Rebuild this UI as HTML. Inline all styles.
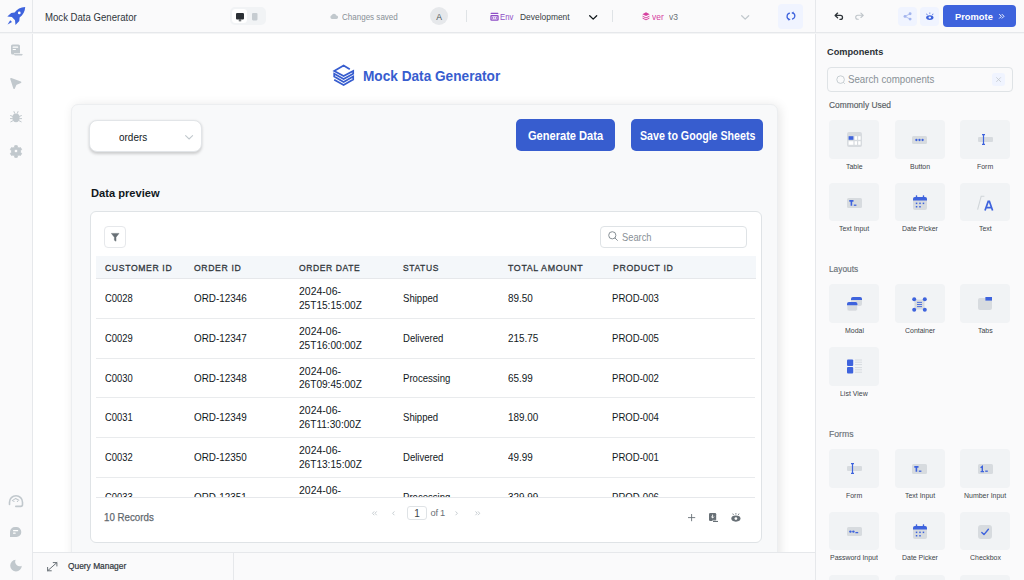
<!DOCTYPE html>
<html><head><meta charset="utf-8">
<style>
*{box-sizing:border-box;margin:0;padding:0}
html,body{width:1024px;height:580px;overflow:hidden;background:#fff;font-family:"Liberation Sans",sans-serif;color:#11181c}
.a{position:absolute}
svg{display:block;overflow:visible}
.t{white-space:nowrap;position:absolute;line-height:1}
</style></head><body>
<div class="a" style="left:0px;top:0px;width:33px;height:580px;background:#fafafb;border-right:1px solid #e6e8eb"></div>
<div class="a" style="left:33px;top:0px;width:782px;height:32px;background:#fafafb"></div>
<div class="a" style="left:815px;top:0px;width:209px;height:580px;background:#fafafb;border-left:1px solid #e6e8eb"></div>
<div class="a" style="left:0px;top:32px;width:1024px;height:1px;background:#e6e8eb"></div>
<div class="a" style="left:0px;top:33px;width:1024px;height:1px;background:#f4f5f6"></div>
<svg class="a" style="left:7px;top:7px;" width="18" height="18" viewBox="0 0 18 18"><g fill="#3e63dd">
<path d="M18.2 0 C13.5 0.2 10.2 2.2 7.6 5.6 L4.2 5.9 L0.3 9.6 L4.9 10.1 L8 13.2 L8.5 18 L12.3 14 L12.6 10.6 C16 8 18 4.8 18.2 0 Z"/>
<path d="M3.2 13.2 L5 15 L0.6 17.6 Z"/>
</g><circle cx="12.3" cy="5.9" r="1.35" fill="#fff"/></svg>
<svg class="a" style="left:10px;top:44px;" width="13" height="12" viewBox="0 0 13 12"><rect x="1" y="0.5" width="9" height="10" rx="1.6" fill="#c1c8cd"/>
<rect x="2.6" y="2.6" width="5.6" height="1.1" rx=".5" fill="#fff"/><rect x="2.6" y="5" width="3.4" height="1.1" rx=".5" fill="#fff"/>
<path d="M5 10.6 L11.8 10.6" stroke="#c1c8cd" stroke-width="1.6" stroke-linecap="round"/><path d="M4 9.6 L12.5 9.6" stroke="#fafafb" stroke-width=".7"/></svg>
<svg class="a" style="left:0px;top:0px;" width="34" height="100" viewBox="0 0 34 100"><path d="M11 78.8 L20.6 82.3 L15.9 84.2 L14.1 88.2 Z" fill="#c1c8cd" stroke="#c1c8cd" stroke-width="1.6" stroke-linejoin="round"/></svg>
<svg class="a" style="left:10px;top:111px;" width="12" height="12" viewBox="0 0 12 12"><g fill="#c1c8cd"><ellipse cx="6" cy="6.8" rx="3.6" ry="4.4"/></g>
<g stroke="#c1c8cd" stroke-width="1" stroke-linecap="round"><path d="M0.6 4.6 L2.6 5.4 M11.4 4.6 L9.4 5.4 M0.4 7.6 L2.4 7.6 M11.6 7.6 L9.6 7.6 M0.8 10.8 L2.8 9.8 M11.2 10.8 L9.2 9.8 M4 0.6 L4.6 2.2 M8 0.6 L7.4 2.2"/></g></svg>
<svg class="a" style="left:10px;top:145px;" width="12" height="12" viewBox="0 0 24 24"><path fill="#c1c8cd" fill-rule="evenodd" d="M9.6 1.2 h4.8 l0.7 3.1 l2.9 1.7 l3-1 l2.4 4.2 l-2.4 2.1 v3.4 l2.4 2.1 l-2.4 4.2 l-3-1 l-2.9 1.7 l-0.7 3.1 h-4.8 l-0.7-3.1 l-2.9-1.7 l-3 1 l-2.4-4.2 l2.4-2.1 v-3.4 l-2.4-2.1 l2.4-4.2 l3 1 l2.9-1.7 Z M12 8.6 a3.4 3.4 0 1 0 0.01 0 Z" stroke="#c1c8cd" stroke-width="1.6" stroke-linejoin="round"/></svg>
<svg class="a" style="left:8px;top:493px;" width="16" height="15" viewBox="0 0 16 15"><path d="M1.5 11.4 V9.2 A6.5 6.5 0 0 1 14.5 9.2 V11.6 Q14.5 13.4 12.7 13.4 H7.8" fill="none" stroke="#c1c8cd" stroke-width="1.6" stroke-linecap="round"/>
<path d="M4.4 7.6 L7.7 5.4 L10.8 7.2" fill="none" stroke="#c1c8cd" stroke-width="1.1" stroke-linecap="round" stroke-linejoin="round"/>
<circle cx="5.9" cy="8.4" r=".65" fill="#c1c8cd"/><circle cx="9.5" cy="8.4" r=".65" fill="#c1c8cd"/></svg>
<svg class="a" style="left:10px;top:526.7px;" width="11.3" height="10" viewBox="0 0 11.3 10"><path d="M0 10 V5 A5 5 0 0 1 5 0 H6.3 A4.9 4.9 0 0 1 11.3 5 A4.9 4.9 0 0 1 6.3 10 Z" fill="#c1c8cd"/>
<rect x="3" y="3.1" width="5.2" height="1.2" rx=".5" fill="#fff"/><rect x="3" y="5.5" width="2.7" height="1.2" rx=".5" fill="#fff"/></svg>
<svg class="a" style="left:10px;top:559px;" width="13" height="13" viewBox="0 0 13 13"><path d="M11.8 6.8 A5.8 5.8 0 1 1 5.6 0.8 A4.6 4.6 0 0 0 11.8 6.8 Z" fill="#c1c8cd"/></svg>
<div class="t" style="left:45.40px;top:12.09px;font-size:10.6px;color:#30363b;font-weight:400;transform:scaleX(0.9059);transform-origin:0 0;">Mock Data Generator</div>
<div class="a" style="left:229.8px;top:6.9px;width:36px;height:18.6px;background:#f1f3f5;border-radius:5px"></div>
<div class="a" style="left:232px;top:9.3px;width:15.4px;height:14px;background:#fff;border-radius:3.5px"></div>
<svg class="a" style="left:236px;top:12.5px;" width="8" height="8.4" viewBox="0 0 8 8.4"><rect x="0" y="0" width="8" height="6.5" rx="1.1" fill="#2b3035"/><rect x="3.45" y="6.2" width="1.1" height="1.4" fill="#2b3035"/><rect x="2.5" y="7.4" width="3" height=".9" rx=".45" fill="#2b3035"/></svg>
<svg class="a" style="left:252.2px;top:12.6px;" width="5.5" height="7.4" viewBox="0 0 5.5 7.4"><rect x="0" y="0" width="5.5" height="7.4" rx="1.1" fill="#c6ccd1"/></svg>
<svg class="a" style="left:330px;top:13px;" width="8" height="6" viewBox="0 0 8 6"><path d="M2 6 A2 2 0 0 1 1.6 2.2 A2.6 2.6 0 0 1 6.4 2.4 A1.8 1.8 0 0 1 6.2 6 Z" fill="#c1c8cd"/></svg>
<div class="t" style="left:341.90px;top:12.62px;font-size:8.8px;color:#889096;font-weight:400;transform:scaleX(0.9125);transform-origin:0 0;">Changes saved</div>
<div class="a" style="left:430px;top:6.9px;width:18.3px;height:18.3px;background:#e6e8eb;border-radius:50%"></div>
<div class="t" style="left:436.33px;top:13.09px;font-size:8.6px;color:#4c5358;font-weight:400;">A</div>
<div class="a" style="left:466px;top:10px;width:1px;height:12px;background:#dfe3e6"></div>
<svg class="a" style="left:489.5px;top:11.5px;" width="9" height="9" viewBox="0 0 9 9"><rect x="0.6" y="0.8" width="7.8" height="1.3" rx=".6" fill="#8e4ec6"/><rect x="0.3" y="2.9" width="8.4" height="5.9" rx="1.2" fill="#8e4ec6"/><rect x="1.6" y="4.2" width="5.8" height="3.3" rx=".3" fill="#f3eafa"/><rect x="2.3" y="4.8" width=".8" height="2.1" fill="#8e4ec6"/><rect x="5.9" y="4.8" width=".8" height="2.1" fill="#8e4ec6"/><rect x="4.1" y="5.4" width=".9" height=".9" fill="#8e4ec6"/></svg>
<div class="t" style="left:500.30px;top:12.55px;font-size:9px;color:#8e4ec6;font-weight:400;transform:scaleX(0.8575);transform-origin:0 0;">Env</div>
<div class="t" style="left:519.80px;top:12.55px;font-size:9px;color:#383e43;font-weight:400;transform:scaleX(0.9353);transform-origin:0 0;">Development</div>
<svg class="a" style="left:588.6px;top:14.6px;" width="8.4" height="4.8" viewBox="0 0 8.4 4.8"><path d="M0.7 0.7 L4.2 4.1 L7.7 0.7" fill="none" stroke="#11181c" stroke-width="1.3" stroke-linecap="round" stroke-linejoin="round"/></svg>
<div class="a" style="left:612px;top:10px;width:1px;height:12px;background:#dfe3e6"></div>
<svg class="a" style="left:641.7px;top:12px;" width="8" height="8.6" viewBox="0 0 8 9"><path d="M4 0.3 L7.8 2.3 L4 4.3 L0.2 2.3 Z" fill="#d6409f"/><path d="M0.4 4.4 L4 6.2 L7.6 4.4 M0.4 6.4 L4 8.2 L7.6 6.4" fill="none" stroke="#d6409f" stroke-width="1"/></svg>
<div class="t" style="left:651.90px;top:12.55px;font-size:9px;color:#d6409f;font-weight:400;transform:scaleX(0.9358);transform-origin:0 0;">ver</div>
<div class="t" style="left:669.00px;top:12.55px;font-size:9px;color:#687076;font-weight:400;transform:scaleX(0.9467);transform-origin:0 0;">v3</div>
<svg class="a" style="left:741.3px;top:14.6px;" width="8.4" height="4.8" viewBox="0 0 8.4 4.8"><path d="M0.7 0.7 L4.2 4.1 L7.7 0.7" fill="none" stroke="#c1c8cd" stroke-width="1.3" stroke-linecap="round" stroke-linejoin="round"/></svg>
<div class="a" style="left:777.8px;top:4px;width:25px;height:24.8px;background:#f0f4ff;border-radius:4px"></div>
<svg class="a" style="left:785px;top:11px;" width="12" height="10" viewBox="0 0 12 10"><path d="M4.9 2.2 A3.2 3.2 0 0 0 4.2 8.4" fill="none" stroke="#3e63dd" stroke-width="1.25"/><path d="M3.3 7.2 L5.6 8.5 L3.5 9.8 Z" fill="#3e63dd"/><path d="M7.0 8.1 A3.2 3.2 0 0 0 7.7 1.9" fill="none" stroke="#3e63dd" stroke-width="1.25"/><path d="M8.6 0.6 L6.3 1.9 L8.4 3.2 Z" fill="#3e63dd"/></svg>
<svg class="a" style="left:834px;top:12px;" width="10" height="9" viewBox="0 0 10 9"><path d="M3.6 1.1 L1.1 3.4 L3.6 5.7 M1.4 3.4 H6.5 A2 2 0 0 1 6.5 7.4 H6" fill="none" stroke="#2f353a" stroke-width="1.3" stroke-linecap="round" stroke-linejoin="round"/></svg>
<svg class="a" style="left:854px;top:12px;" width="10" height="9" viewBox="0 0 10 9"><path d="M6.9 1.1 L9.3 3.3 L6.9 5.5 M9 3.3 H3.7 A2 2 0 0 0 3.7 7.3 H4.3" fill="none" stroke="#bfc5ca" stroke-width="1.1" stroke-linecap="round" stroke-linejoin="round"/></svg>
<div class="a" style="left:898px;top:7px;width:19px;height:19px;background:#f0f4ff;border-radius:4px"></div>
<svg class="a" style="left:900px;top:10px;" width="14" height="12" viewBox="0 0 14 12"><circle cx="10.1" cy="3.8" r="1.45" fill="#a3b5ee"/><circle cx="5" cy="6.4" r="1.45" fill="#a3b5ee"/><circle cx="10.1" cy="9.1" r="1.45" fill="#a3b5ee"/><path d="M10.1 3.8 L5 6.4 L10.1 9.1" fill="none" stroke="#a3b5ee" stroke-width=".8"/></svg>
<div class="a" style="left:920px;top:7px;width:19px;height:19px;background:#f0f4ff;border-radius:4px"></div>
<svg class="a" style="left:922px;top:10px;" width="16" height="12" viewBox="0 0 16 12"><ellipse cx="7.8" cy="7.6" rx="3.7" ry="2.45" fill="#3e63dd"/><ellipse cx="7.8" cy="7.6" rx="1.3" ry="1.05" fill="#f0f4ff"/><path d="M4.6 4.2 L5.1 4.4 M7.8 3.0 V3.3 M11 4.2 L10.5 4.4" stroke="#3e63dd" stroke-width=".85" stroke-linecap="round"/></svg>
<div class="a" style="left:942.6px;top:5.1px;width:73.2px;height:22.3px;background:#3e63dd;border-radius:4px"></div>
<div class="t" style="left:954.50px;top:12.35px;font-size:9.7px;color:#fff;font-weight:700;transform:scaleX(0.9633);transform-origin:0 0;">Promote</div>
<svg class="a" style="left:998.8px;top:14.3px;" width="5.6" height="4.6" viewBox="0 0 5.6 4.6"><path d="M0.5 0.4 L2.4 2.3 L0.5 4.2 M3.1 0.4 L5 2.3 L3.1 4.2" fill="none" stroke="#fff" stroke-width=".95" stroke-linecap="round" stroke-linejoin="round"/></svg>
<svg class="a" style="left:330px;top:62px;" width="28" height="28" viewBox="0 0 28 28"><path d="M19.8 7.3 L13.6 3.5 L4.2 8.9 L13.6 14.1 L23.2 8.9 V11.7 L13.6 17 L4.2 11.8 V14.6 L13.6 19.9 L23.2 14.6 V17.5 L13.6 22.9 L4.2 17.7" fill="none" stroke="#375dcf" stroke-width="1.75" stroke-linejoin="miter" stroke-linecap="butt"/></svg>
<div class="t" style="left:362.90px;top:69.06px;font-size:14.4px;color:#375dcf;font-weight:700;transform:scaleX(0.9479);transform-origin:0 0;">Mock Data Generator</div>
<div class="a" style="left:71px;top:104.3px;width:706.5px;height:520px;background:#f8f9fa;border:1px solid #eceef0;border-radius:7px;box-shadow:2px 1px 11px rgba(0,0,0,0.10)"></div>
<div class="a" style="left:89.2px;top:120.4px;width:112.4px;height:32px;background:#fff;border-radius:8px;border:1px solid #e2e5e8;box-shadow:0 1.5px 3px rgba(0,0,0,0.18)"></div>
<div class="t" style="left:119.00px;top:133.00px;font-size:10px;color:#11181c;font-weight:400;transform:scaleX(0.9949);transform-origin:0 0;">orders</div>
<svg class="a" style="left:184.7px;top:135.3px;" width="8.2" height="4.5" viewBox="0 0 8.2 4.5"><path d="M0.6 0.6 L4.1 3.9 L7.6 0.6" fill="none" stroke="#c1c8cd" stroke-width="1.1" stroke-linecap="round"/></svg>
<div class="a" style="left:516px;top:119px;width:98.6px;height:32px;background:#375dcf;border-radius:5px"></div>
<div class="t" style="left:527.90px;top:130.16px;font-size:12.4px;color:#fff;font-weight:700;transform:scaleX(0.8932);transform-origin:0 0;">Generate Data</div>
<div class="a" style="left:630.8px;top:119px;width:132px;height:32px;background:#375dcf;border-radius:5px"></div>
<div class="t" style="left:639.50px;top:130.16px;font-size:12.4px;color:#fff;font-weight:700;transform:scaleX(0.8595);transform-origin:0 0;">Save to Google Sheets</div>
<div class="t" style="left:90.70px;top:188.02px;font-size:10.8px;color:#11181c;font-weight:700;transform:scaleX(1.0296);transform-origin:0 0;">Data preview</div>
<div class="a" style="left:89.7px;top:211.1px;width:672.2px;height:331.6px;background:#fff;border:1px solid #dfe3e6;border-radius:6px"></div>
<div class="a" style="left:104px;top:226.3px;width:22px;height:21.7px;border:1px solid #e6e8eb;border-radius:4px;background:#fff"></div>
<svg class="a" style="left:111px;top:232.8px;" width="8.4" height="8.6" viewBox="0 0 8.4 8.6"><path d="M0.4 0.4 H8 L5 4.2 V8.2 L3.4 7.2 V4.2 Z" fill="#687076" stroke="#687076" stroke-width=".5" stroke-linejoin="round"/></svg>
<div class="a" style="left:600.2px;top:226.1px;width:146.6px;height:21.8px;border:1px solid #dfe3e6;border-radius:4px;background:#fff"></div>
<svg class="a" style="left:608px;top:230.5px;" width="10" height="10" viewBox="0 0 10 10"><circle cx="4.3" cy="4.3" r="3.6" fill="none" stroke="#889096" stroke-width="1"/><path d="M7 7 L9.4 9.4" stroke="#889096" stroke-width="1" stroke-linecap="round"/></svg>
<div class="t" style="left:621.60px;top:233.03px;font-size:10.2px;color:#889096;font-weight:400;transform:scaleX(0.9159);transform-origin:0 0;">Search</div>
<div class="a" style="left:96px;top:256.1px;width:659.8px;height:22.3px;background:#f4f7fa"></div>
<div class="a" style="left:96px;top:278.1px;width:659.8px;height:1px;background:#e6e8eb"></div>
<div class="t" style="left:104.50px;top:263.28px;font-size:9.9px;color:#30363b;font-weight:400;transform:scaleX(0.8774);transform-origin:0 0;letter-spacing:0.7px;-webkit-text-stroke:0.3px #30363b;">CUSTOMER ID</div>
<div class="t" style="left:194.00px;top:263.28px;font-size:9.9px;color:#30363b;font-weight:400;transform:scaleX(0.8777);transform-origin:0 0;letter-spacing:0.7px;-webkit-text-stroke:0.3px #30363b;">ORDER ID</div>
<div class="t" style="left:298.50px;top:263.28px;font-size:9.9px;color:#30363b;font-weight:400;transform:scaleX(0.8641);transform-origin:0 0;letter-spacing:0.7px;-webkit-text-stroke:0.3px #30363b;">ORDER DATE</div>
<div class="t" style="left:403.00px;top:263.28px;font-size:9.9px;color:#30363b;font-weight:400;transform:scaleX(0.8616);transform-origin:0 0;letter-spacing:0.7px;-webkit-text-stroke:0.3px #30363b;">STATUS</div>
<div class="t" style="left:508.00px;top:263.28px;font-size:9.9px;color:#30363b;font-weight:400;transform:scaleX(0.8963);transform-origin:0 0;letter-spacing:0.7px;-webkit-text-stroke:0.3px #30363b;">TOTAL AMOUNT</div>
<div class="t" style="left:612.50px;top:263.28px;font-size:9.9px;color:#30363b;font-weight:400;transform:scaleX(0.8857);transform-origin:0 0;letter-spacing:0.7px;-webkit-text-stroke:0.3px #30363b;">PRODUCT ID</div>
<div class="a" style="left:0;top:0;width:1024px;height:497.3px;overflow:hidden">
<div class="t" style="left:104.50px;top:294.15px;font-size:10.3px;color:#11181c;font-weight:400;transform:scaleX(0.9100);transform-origin:0 0;">C0028</div>
<div class="t" style="left:194.00px;top:294.15px;font-size:10.3px;color:#11181c;font-weight:400;transform:scaleX(0.9600);transform-origin:0 0;">ORD-12346</div>
<div class="t" style="left:298.50px;top:287.05px;font-size:10.3px;color:#11181c;font-weight:400;transform:scaleX(1.0200);transform-origin:0 0;">2024-06-</div>
<div class="t" style="left:298.50px;top:300.94px;font-size:10.3px;color:#11181c;font-weight:400;transform:scaleX(0.9800);transform-origin:0 0;">25T15:15:00Z</div>
<div class="t" style="left:403.00px;top:294.15px;font-size:10.3px;color:#11181c;font-weight:400;transform:scaleX(0.9300);transform-origin:0 0;">Shipped</div>
<div class="t" style="left:508.00px;top:294.15px;font-size:10.3px;color:#11181c;font-weight:400;transform:scaleX(0.9600);transform-origin:0 0;">89.50</div>
<div class="t" style="left:612.00px;top:294.15px;font-size:10.3px;color:#11181c;font-weight:400;transform:scaleX(0.9300);transform-origin:0 0;">PROD-003</div>
<div class="a" style="left:96px;top:317.85px;width:659.2px;height:1px;background:#e9ebed"></div>
<div class="t" style="left:104.50px;top:333.90px;font-size:10.3px;color:#11181c;font-weight:400;transform:scaleX(0.9100);transform-origin:0 0;">C0029</div>
<div class="t" style="left:194.00px;top:333.90px;font-size:10.3px;color:#11181c;font-weight:400;transform:scaleX(0.9600);transform-origin:0 0;">ORD-12347</div>
<div class="t" style="left:298.50px;top:326.80px;font-size:10.3px;color:#11181c;font-weight:400;transform:scaleX(1.0200);transform-origin:0 0;">2024-06-</div>
<div class="t" style="left:298.50px;top:340.69px;font-size:10.3px;color:#11181c;font-weight:400;transform:scaleX(0.9800);transform-origin:0 0;">25T16:00:00Z</div>
<div class="t" style="left:403.00px;top:333.90px;font-size:10.3px;color:#11181c;font-weight:400;transform:scaleX(0.9300);transform-origin:0 0;">Delivered</div>
<div class="t" style="left:508.00px;top:333.90px;font-size:10.3px;color:#11181c;font-weight:400;transform:scaleX(0.9600);transform-origin:0 0;">215.75</div>
<div class="t" style="left:612.00px;top:333.90px;font-size:10.3px;color:#11181c;font-weight:400;transform:scaleX(0.9300);transform-origin:0 0;">PROD-005</div>
<div class="a" style="left:96px;top:357.6px;width:659.2px;height:1px;background:#e9ebed"></div>
<div class="t" style="left:104.50px;top:373.65px;font-size:10.3px;color:#11181c;font-weight:400;transform:scaleX(0.9100);transform-origin:0 0;">C0030</div>
<div class="t" style="left:194.00px;top:373.65px;font-size:10.3px;color:#11181c;font-weight:400;transform:scaleX(0.9600);transform-origin:0 0;">ORD-12348</div>
<div class="t" style="left:298.50px;top:366.55px;font-size:10.3px;color:#11181c;font-weight:400;transform:scaleX(1.0200);transform-origin:0 0;">2024-06-</div>
<div class="t" style="left:298.50px;top:380.44px;font-size:10.3px;color:#11181c;font-weight:400;transform:scaleX(0.9800);transform-origin:0 0;">26T09:45:00Z</div>
<div class="t" style="left:403.00px;top:373.65px;font-size:10.3px;color:#11181c;font-weight:400;transform:scaleX(0.9300);transform-origin:0 0;">Processing</div>
<div class="t" style="left:508.00px;top:373.65px;font-size:10.3px;color:#11181c;font-weight:400;transform:scaleX(0.9600);transform-origin:0 0;">65.99</div>
<div class="t" style="left:612.00px;top:373.65px;font-size:10.3px;color:#11181c;font-weight:400;transform:scaleX(0.9300);transform-origin:0 0;">PROD-002</div>
<div class="a" style="left:96px;top:397.35px;width:659.2px;height:1px;background:#e9ebed"></div>
<div class="t" style="left:104.50px;top:413.40px;font-size:10.3px;color:#11181c;font-weight:400;transform:scaleX(0.9100);transform-origin:0 0;">C0031</div>
<div class="t" style="left:194.00px;top:413.40px;font-size:10.3px;color:#11181c;font-weight:400;transform:scaleX(0.9600);transform-origin:0 0;">ORD-12349</div>
<div class="t" style="left:298.50px;top:406.30px;font-size:10.3px;color:#11181c;font-weight:400;transform:scaleX(1.0200);transform-origin:0 0;">2024-06-</div>
<div class="t" style="left:298.50px;top:420.19px;font-size:10.3px;color:#11181c;font-weight:400;transform:scaleX(0.9800);transform-origin:0 0;">26T11:30:00Z</div>
<div class="t" style="left:403.00px;top:413.40px;font-size:10.3px;color:#11181c;font-weight:400;transform:scaleX(0.9300);transform-origin:0 0;">Shipped</div>
<div class="t" style="left:508.00px;top:413.40px;font-size:10.3px;color:#11181c;font-weight:400;transform:scaleX(0.9600);transform-origin:0 0;">189.00</div>
<div class="t" style="left:612.00px;top:413.40px;font-size:10.3px;color:#11181c;font-weight:400;transform:scaleX(0.9300);transform-origin:0 0;">PROD-004</div>
<div class="a" style="left:96px;top:437.1px;width:659.2px;height:1px;background:#e9ebed"></div>
<div class="t" style="left:104.50px;top:453.15px;font-size:10.3px;color:#11181c;font-weight:400;transform:scaleX(0.9100);transform-origin:0 0;">C0032</div>
<div class="t" style="left:194.00px;top:453.15px;font-size:10.3px;color:#11181c;font-weight:400;transform:scaleX(0.9600);transform-origin:0 0;">ORD-12350</div>
<div class="t" style="left:298.50px;top:446.05px;font-size:10.3px;color:#11181c;font-weight:400;transform:scaleX(1.0200);transform-origin:0 0;">2024-06-</div>
<div class="t" style="left:298.50px;top:459.94px;font-size:10.3px;color:#11181c;font-weight:400;transform:scaleX(0.9800);transform-origin:0 0;">26T13:15:00Z</div>
<div class="t" style="left:403.00px;top:453.15px;font-size:10.3px;color:#11181c;font-weight:400;transform:scaleX(0.9300);transform-origin:0 0;">Delivered</div>
<div class="t" style="left:508.00px;top:453.15px;font-size:10.3px;color:#11181c;font-weight:400;transform:scaleX(0.9600);transform-origin:0 0;">49.99</div>
<div class="t" style="left:612.00px;top:453.15px;font-size:10.3px;color:#11181c;font-weight:400;transform:scaleX(0.9300);transform-origin:0 0;">PROD-001</div>
<div class="a" style="left:96px;top:476.85px;width:659.2px;height:1px;background:#e9ebed"></div>
<div class="t" style="left:104.50px;top:492.90px;font-size:10.3px;color:#11181c;font-weight:400;transform:scaleX(0.9100);transform-origin:0 0;">C0033</div>
<div class="t" style="left:194.00px;top:492.90px;font-size:10.3px;color:#11181c;font-weight:400;transform:scaleX(0.9600);transform-origin:0 0;">ORD-12351</div>
<div class="t" style="left:298.50px;top:485.80px;font-size:10.3px;color:#11181c;font-weight:400;transform:scaleX(1.0200);transform-origin:0 0;">2024-06-</div>
<div class="t" style="left:298.50px;top:499.69px;font-size:10.3px;color:#11181c;font-weight:400;transform:scaleX(0.9800);transform-origin:0 0;">26T15:00:00Z</div>
<div class="t" style="left:403.00px;top:492.90px;font-size:10.3px;color:#11181c;font-weight:400;transform:scaleX(0.9300);transform-origin:0 0;">Processing</div>
<div class="t" style="left:508.00px;top:492.90px;font-size:10.3px;color:#11181c;font-weight:400;transform:scaleX(0.9600);transform-origin:0 0;">329.99</div>
<div class="t" style="left:612.00px;top:492.90px;font-size:10.3px;color:#11181c;font-weight:400;transform:scaleX(0.9300);transform-origin:0 0;">PROD-006</div>
<div class="a" style="left:96px;top:516.6px;width:659.2px;height:1px;background:#e9ebed"></div>
</div>
<div class="a" style="left:96px;top:497px;width:659.2px;height:1px;background:#e6e8eb"></div>
<div class="t" style="left:104.40px;top:511.72px;font-size:10.8px;color:#5f676d;font-weight:400;transform:scaleX(0.9017);transform-origin:0 0;-webkit-text-stroke:0.25px #5f676d;">10 Records</div>
<svg class="a" style="left:372px;top:510.5px;" width="5.2" height="4.6" viewBox="0 0 5.2 4.6"><path d="M2.2 0.4 L0.5 2.3 L2.2 4.2 M4.7 0.4 L3 2.3 L4.7 4.2" fill="none" stroke="#c1c8cd" stroke-width=".9"/></svg>
<svg class="a" style="left:392px;top:510.5px;" width="3" height="4.6" viewBox="0 0 3 4.6"><path d="M2.4 0.4 L0.6 2.3 L2.4 4.2" fill="none" stroke="#c1c8cd" stroke-width=".9"/></svg>
<div class="a" style="left:407.2px;top:506.3px;width:19.8px;height:13.4px;border:1px solid #dfe3e6;border-radius:3px;background:#fff"></div>
<div class="t" style="left:414.32px;top:508.80px;font-size:10px;color:#3c4349;font-weight:400;">1</div>
<div class="t" style="left:430.50px;top:509.30px;font-size:9.3px;color:#687076;font-weight:400;letter-spacing:-0.25px;">of 1</div>
<svg class="a" style="left:455px;top:510.5px;" width="3" height="4.6" viewBox="0 0 3 4.6"><path d="M0.6 0.4 L2.4 2.3 L0.6 4.2" fill="none" stroke="#c1c8cd" stroke-width=".9"/></svg>
<svg class="a" style="left:474.5px;top:510.5px;" width="5.2" height="4.6" viewBox="0 0 5.2 4.6"><path d="M0.5 0.4 L2.2 2.3 L0.5 4.2 M3 0.4 L4.7 2.3 L3 4.2" fill="none" stroke="#c1c8cd" stroke-width=".9"/></svg>
<svg class="a" style="left:687.5px;top:514px;" width="7.2" height="7.2" viewBox="0 0 7.2 7.2"><path d="M3.6 0 V7.2 M0 3.6 H7.2" stroke="#687076" stroke-width=".9"/></svg>
<svg class="a" style="left:709px;top:512.8px;" width="9.2" height="9.2" viewBox="0 0 9.2 9.2"><rect x="0" y="0" width="7.2" height="8" rx="1.2" fill="#687076"/><path d="M3.6 1.6 V5 M2.2 3.6 L3.6 5 L5 3.6" stroke="#fff" stroke-width=".9" fill="none"/><path d="M4 8.4 H9" stroke="#687076" stroke-width="1.2"/><path d="M3.2 7.4 H9.2" stroke="#fff" stroke-width=".6"/></svg>
<svg class="a" style="left:731px;top:512px;" width="10" height="10" viewBox="0 0 10 10"><ellipse cx="4.9" cy="6.6" rx="4.6" ry="3.05" fill="#687076"/><circle cx="4.9" cy="6.6" r="1.35" fill="#fff"/><path d="M1.9 1.9 L2.4 2.7 M4.9 1.4 V2.2 M7.9 1.9 L7.4 2.7" stroke="#687076" stroke-width=".8" stroke-linecap="round"/></svg>
<div class="a" style="left:33px;top:552px;width:782px;height:28px;background:#fafafb;border-top:1px solid #e6e8eb"></div>
<div class="a" style="left:233px;top:553px;width:1px;height:27px;background:#e6e8eb"></div>
<svg class="a" style="left:46.8px;top:561.8px;" width="10.5" height="9.4" viewBox="0 0 10.5 9.4"><path d="M0.6 8.8 L9.9 0.6 M6.2 0.6 H9.9 V4 M0.6 5.4 V8.8 H4.3" fill="none" stroke="#687076" stroke-width="1" stroke-linecap="round"/></svg>
<div class="t" style="left:68.00px;top:562.42px;font-size:8.8px;color:#30363b;font-weight:400;transform:scaleX(0.9519);transform-origin:0 0;-webkit-text-stroke:0.2px #30363b;">Query Manager</div>
<div class="t" style="left:827.20px;top:46.54px;font-size:9.6px;color:#2b3136;font-weight:700;transform:scaleX(0.9597);transform-origin:0 0;">Components</div>
<div class="a" style="left:827px;top:67px;width:186px;height:25.1px;border:1px solid #dfe3e6;border-radius:4px;background:#fafafb"></div>
<svg class="a" style="left:836.2px;top:74.8px;" width="9" height="9" viewBox="0 0 9 9"><circle cx="4.6" cy="4.6" r="3.8" fill="none" stroke="#c1c8cd" stroke-width=".9"/><path d="M7.3 7.3 L8.8 8.8" stroke="#c1c8cd" stroke-width=".9"/></svg>
<div class="t" style="left:847.50px;top:75.16px;font-size:10.4px;color:#889096;font-weight:400;transform:scaleX(0.9341);transform-origin:0 0;">Search components</div>
<div class="a" style="left:991.8px;top:72.7px;width:13.6px;height:13.6px;background:#f0f4ff;border-radius:3px"></div>
<svg class="a" style="left:996px;top:76.9px;" width="5.2" height="5.2" viewBox="0 0 5.2 5.2"><path d="M0.3 0.3 L4.9 4.9 M4.9 0.3 L0.3 4.9" stroke="#c1c8cd" stroke-width=".8"/></svg>
<div class="t" style="left:829.20px;top:101.22px;font-size:8.8px;color:#565d63;font-weight:400;transform:scaleX(0.9532);transform-origin:0 0;-webkit-text-stroke:0.15px #565d63;">Commonly Used</div>
<div class="a" style="left:829.2px;top:120px;width:50px;height:38.7px;background:#f1f3f5;border-radius:4px"></div>
<div class="t" style="left:845.89px;top:162.51px;font-size:7.4px;color:#3c4349;font-weight:400;transform:scaleX(0.9400);transform-origin:0 0;">Table</div>
<svg class="a" style="left:846.7px;top:132.3px" width="15" height="15" viewBox="0 0 15 15"><rect x="0" y="0" width="15" height="15" rx="2" fill="#d7dbdf"/><rect x="1.6" y="4.2" width="4.8" height="3.6" fill="#3e63dd"/><rect x="7.6" y="4.2" width="2.4" height="3.6" fill="#fff"/><rect x="11.2" y="4.2" width="2.4" height="3.6" fill="#fff"/><rect x="1.6" y="9.2" width="4.8" height="3.6" fill="#fff"/><rect x="7.6" y="9.2" width="2.4" height="3.6" fill="#fff"/><rect x="11.2" y="9.2" width="2.4" height="3.6" fill="#fff"/></svg>
<div class="a" style="left:894.8px;top:120px;width:50px;height:38.7px;background:#f1f3f5;border-radius:4px"></div>
<div class="t" style="left:909.74px;top:162.51px;font-size:7.4px;color:#3c4349;font-weight:400;transform:scaleX(0.9400);transform-origin:0 0;">Button</div>
<svg class="a" style="left:912.3px;top:135.8px" width="15" height="8" viewBox="0 0 15 8"><rect x="0" y="0" width="15" height="8" rx="1.5" fill="#d7dbdf"/><circle cx="4.4" cy="4" r="1.15" fill="#3e63dd"/><circle cx="7.5" cy="4" r="1.15" fill="#3e63dd"/><circle cx="10.6" cy="4" r="1.15" fill="#3e63dd"/></svg>
<div class="a" style="left:960.4px;top:120px;width:50px;height:38.7px;background:#f1f3f5;border-radius:4px"></div>
<div class="t" style="left:977.29px;top:162.51px;font-size:7.4px;color:#3c4349;font-weight:400;transform:scaleX(0.9400);transform-origin:0 0;">Form</div>
<svg class="a" style="left:977.9px;top:134.3px" width="15" height="11" viewBox="0 0 15 11"><rect x="0" y="3" width="15" height="5" rx="1" fill="#d7dbdf"/><path d="M5.5 0.6 V10.4 M4 0.6 H7 M4 10.4 H7" stroke="#3e63dd" stroke-width="1.2"/></svg>
<div class="a" style="left:829.2px;top:182.75px;width:50px;height:38.7px;background:#f1f3f5;border-radius:4px"></div>
<div class="t" style="left:839.12px;top:225.26px;font-size:7.4px;color:#3c4349;font-weight:400;transform:scaleX(0.9400);transform-origin:0 0;">Text Input</div>
<svg class="a" style="left:846.7px;top:197.55px" width="15" height="10" viewBox="0 0 15 10"><rect x="0" y="0" width="15" height="10" rx="1.5" fill="#d7dbdf"/><path d="M2.3 2.9 H6.5 M4.4 2.9 V7.8" stroke="#3e63dd" stroke-width="1.6"/><path d="M6.8 7.2 H9.4" stroke="#3e63dd" stroke-width="1.3"/></svg>
<div class="a" style="left:894.8px;top:182.75px;width:50px;height:38.7px;background:#f1f3f5;border-radius:4px"></div>
<div class="t" style="left:901.82px;top:225.26px;font-size:7.4px;color:#3c4349;font-weight:400;transform:scaleX(0.9400);transform-origin:0 0;">Date Picker</div>
<svg class="a" style="left:912.8px;top:195.05px" width="14" height="15" viewBox="0 0 14 15"><rect x="0" y="2" width="14" height="13" rx="2" fill="#d7dbdf"/><path d="M0 4 A2 2 0 0 1 2 2 H12 A2 2 0 0 1 14 4 V5.6 H0 Z" fill="#3e63dd"/><rect x="2.8" y="0.2" width="1.4" height="3" rx=".5" fill="#3e63dd"/><rect x="9.8" y="0.2" width="1.4" height="3" rx=".5" fill="#3e63dd"/><g fill="#3e63dd"><rect x="2.8" y="7.6" width="1.5" height="1.5"/><rect x="6.25" y="7.6" width="1.5" height="1.5"/><rect x="9.7" y="7.6" width="1.5" height="1.5"/><rect x="2.8" y="11" width="1.5" height="1.5"/><rect x="6.25" y="11" width="1.5" height="1.5"/></g></svg>
<div class="a" style="left:960.4px;top:182.75px;width:50px;height:38.7px;background:#f1f3f5;border-radius:4px"></div>
<div class="t" style="left:979.02px;top:225.26px;font-size:7.4px;color:#3c4349;font-weight:400;transform:scaleX(0.9400);transform-origin:0 0;">Text</div>
<svg class="a" style="left:977.4px;top:195.55px" width="16" height="14" viewBox="0 0 16 14"><path d="M0.6 13.6 L4.2 0.2 H7.4" fill="none" stroke="#d0d5d9" stroke-width="1.1"/><path d="M8 14.5 L11.2 5.4 H12.4 L15.6 14.5 M9.2 11.6 H14.4" fill="none" stroke="#3e63dd" stroke-width="1.7"/></svg>
<div class="t" style="left:829.20px;top:265.12px;font-size:8.8px;color:#687076;font-weight:400;transform:scaleX(0.9441);transform-origin:0 0;-webkit-text-stroke:0.15px #687076;">Layouts</div>
<div class="a" style="left:829.2px;top:284.3px;width:50px;height:38.7px;background:#f1f3f5;border-radius:4px"></div>
<div class="t" style="left:844.73px;top:326.81px;font-size:7.4px;color:#3c4349;font-weight:400;transform:scaleX(0.9400);transform-origin:0 0;">Modal</div>
<svg class="a" style="left:846.7px;top:297.1px" width="15" height="14" viewBox="0 0 15 14"><rect x="4" y="0" width="11" height="9" rx="2" fill="#d7dbdf"/><path d="M4 2 A2 2 0 0 1 6 0 H13 A2 2 0 0 1 15 2 V3 H4 Z" fill="#3e63dd"/><rect x="0" y="5" width="10.5" height="9" rx="2" fill="#d7dbdf" stroke="#f1f3f5" stroke-width=".6"/><path d="M0 7 A2 2 0 0 1 2 5 H8.5 A2 2 0 0 1 10.5 7 V8.2 H0 Z" fill="#3e63dd"/></svg>
<div class="a" style="left:894.8px;top:284.3px;width:50px;height:38.7px;background:#f1f3f5;border-radius:4px"></div>
<div class="t" style="left:904.72px;top:326.81px;font-size:7.4px;color:#3c4349;font-weight:400;transform:scaleX(0.9400);transform-origin:0 0;">Container</div>
<svg class="a" style="left:912.3px;top:296.6px" width="15" height="15" viewBox="0 0 15 15"><rect x="2.5" y="2.5" width="10" height="10" fill="#d7dbdf"/><path d="M5 5.4 H10 M5 7.5 H10 M5 9.6 H10" stroke="#3e63dd" stroke-width=".9"/><g fill="#3e63dd"><circle cx="2.2" cy="2.2" r="2"/><circle cx="12.8" cy="2.2" r="2"/><circle cx="2.2" cy="12.8" r="2"/><circle cx="12.8" cy="12.8" r="2"/></g></svg>
<div class="a" style="left:960.4px;top:284.3px;width:50px;height:38.7px;background:#f1f3f5;border-radius:4px"></div>
<div class="t" style="left:978.05px;top:326.81px;font-size:7.4px;color:#3c4349;font-weight:400;transform:scaleX(0.9400);transform-origin:0 0;">Tabs</div>
<svg class="a" style="left:978.4px;top:297.1px" width="14" height="13" viewBox="0 0 14 13"><rect x="0" y="1" width="14" height="12" rx="2" fill="#d7dbdf"/><rect x="7.4" y="0" width="6.6" height="3.6" fill="#3e63dd"/></svg>
<div class="a" style="left:829.2px;top:347px;width:50px;height:38.7px;background:#f1f3f5;border-radius:4px"></div>
<div class="t" style="left:840.35px;top:389.51px;font-size:7.4px;color:#3c4349;font-weight:400;transform:scaleX(0.9400);transform-origin:0 0;">List View</div>
<svg class="a" style="left:846.7px;top:359.3px" width="15" height="15" viewBox="0 0 15 15"><rect x="0" y="0.5" width="6.2" height="6.4" rx="1" fill="#3e63dd"/><rect x="0" y="8.1" width="6.2" height="6.4" rx="1" fill="#3e63dd"/><g stroke="#d7dbdf" stroke-width="1"><path d="M8 1 H15 M8 3.2 H15 M8 5.6 H15 M8 8.6 H15 M8 10.8 H15 M8 13.2 H15"/></g></svg>
<div class="t" style="left:829.20px;top:429.82px;font-size:8.8px;color:#687076;font-weight:400;transform:scaleX(0.9827);transform-origin:0 0;-webkit-text-stroke:0.15px #687076;">Forms</div>
<div class="a" style="left:829.2px;top:449px;width:50px;height:38.7px;background:#f1f3f5;border-radius:4px"></div>
<div class="t" style="left:846.09px;top:491.51px;font-size:7.4px;color:#3c4349;font-weight:400;transform:scaleX(0.9400);transform-origin:0 0;">Form</div>
<svg class="a" style="left:846.7px;top:463.3px" width="15" height="11" viewBox="0 0 15 11"><rect x="0" y="3" width="15" height="5" rx="1" fill="#d7dbdf"/><path d="M5.5 0.6 V10.4 M4 0.6 H7 M4 10.4 H7" stroke="#3e63dd" stroke-width="1.2"/></svg>
<div class="a" style="left:894.8px;top:449px;width:50px;height:38.7px;background:#f1f3f5;border-radius:4px"></div>
<div class="t" style="left:904.72px;top:491.51px;font-size:7.4px;color:#3c4349;font-weight:400;transform:scaleX(0.9400);transform-origin:0 0;">Text Input</div>
<svg class="a" style="left:912.3px;top:463.8px" width="15" height="10" viewBox="0 0 15 10"><rect x="0" y="0" width="15" height="10" rx="1.5" fill="#d7dbdf"/><path d="M2.3 2.9 H6.5 M4.4 2.9 V7.8" stroke="#3e63dd" stroke-width="1.6"/><path d="M6.8 7.2 H9.4" stroke="#3e63dd" stroke-width="1.3"/></svg>
<div class="a" style="left:960.4px;top:449px;width:50px;height:38.7px;background:#f1f3f5;border-radius:4px"></div>
<div class="t" style="left:964.33px;top:491.51px;font-size:7.4px;color:#3c4349;font-weight:400;transform:scaleX(0.9400);transform-origin:0 0;">Number Input</div>
<svg class="a" style="left:977.9px;top:463.8px" width="15" height="10" viewBox="0 0 15 10"><rect x="0" y="0" width="15" height="10" rx="1.5" fill="#d7dbdf"/><path d="M2.6 3.8 L4.3 2.5 V7.6 M2.6 7.6 H6" stroke="#3e63dd" stroke-width="1.4" fill="none"/><path d="M7.2 7.2 H9.8" stroke="#3e63dd" stroke-width="1.3"/></svg>
<div class="a" style="left:829.2px;top:511.75px;width:50px;height:38.7px;background:#f1f3f5;border-radius:4px"></div>
<div class="t" style="left:830.23px;top:554.26px;font-size:7.4px;color:#3c4349;font-weight:400;transform:scaleX(0.9400);transform-origin:0 0;">Password Input</div>
<svg class="a" style="left:846.7px;top:527.05px" width="15" height="9" viewBox="0 0 15 9"><rect x="0" y="0" width="15" height="9" rx="1.5" fill="#d7dbdf"/><circle cx="3.4" cy="4.6" r="1.2" fill="#3e63dd"/><circle cx="6.4" cy="4.6" r="1.2" fill="#3e63dd"/><path d="M8.4 5.6 H11.2" stroke="#3e63dd" stroke-width="1.3"/></svg>
<div class="a" style="left:894.8px;top:511.75px;width:50px;height:38.7px;background:#f1f3f5;border-radius:4px"></div>
<div class="t" style="left:901.82px;top:554.26px;font-size:7.4px;color:#3c4349;font-weight:400;transform:scaleX(0.9400);transform-origin:0 0;">Date Picker</div>
<svg class="a" style="left:912.8px;top:524.05px" width="14" height="15" viewBox="0 0 14 15"><rect x="0" y="2" width="14" height="13" rx="2" fill="#d7dbdf"/><path d="M0 4 A2 2 0 0 1 2 2 H12 A2 2 0 0 1 14 4 V5.6 H0 Z" fill="#3e63dd"/><rect x="2.8" y="0.2" width="1.4" height="3" rx=".5" fill="#3e63dd"/><rect x="9.8" y="0.2" width="1.4" height="3" rx=".5" fill="#3e63dd"/><g fill="#3e63dd"><rect x="2.8" y="7.6" width="1.5" height="1.5"/><rect x="6.25" y="7.6" width="1.5" height="1.5"/><rect x="9.7" y="7.6" width="1.5" height="1.5"/><rect x="2.8" y="11" width="1.5" height="1.5"/><rect x="6.25" y="11" width="1.5" height="1.5"/></g></svg>
<div class="a" style="left:960.4px;top:511.75px;width:50px;height:38.7px;background:#f1f3f5;border-radius:4px"></div>
<div class="t" style="left:969.93px;top:554.26px;font-size:7.4px;color:#3c4349;font-weight:400;transform:scaleX(0.9400);transform-origin:0 0;">Checkbox</div>
<svg class="a" style="left:978.4px;top:524.55px" width="14" height="14" viewBox="0 0 14 14"><rect x="0" y="0" width="14" height="14" rx="3" fill="#d7dbdf"/><path d="M3.8 7.4 L6 9.6 L10.4 4.2" fill="none" stroke="#3e63dd" stroke-width="1.4" stroke-linecap="round" stroke-linejoin="round"/></svg>
<div class="a" style="left:829.2px;top:574.5px;width:50px;height:38.7px;background:#f1f3f5;border-radius:4px"></div>
<div class="a" style="left:894.8px;top:574.5px;width:50px;height:38.7px;background:#f1f3f5;border-radius:4px"></div>
<div class="a" style="left:960.4px;top:574.5px;width:50px;height:38.7px;background:#f1f3f5;border-radius:4px"></div>
</body></html>
